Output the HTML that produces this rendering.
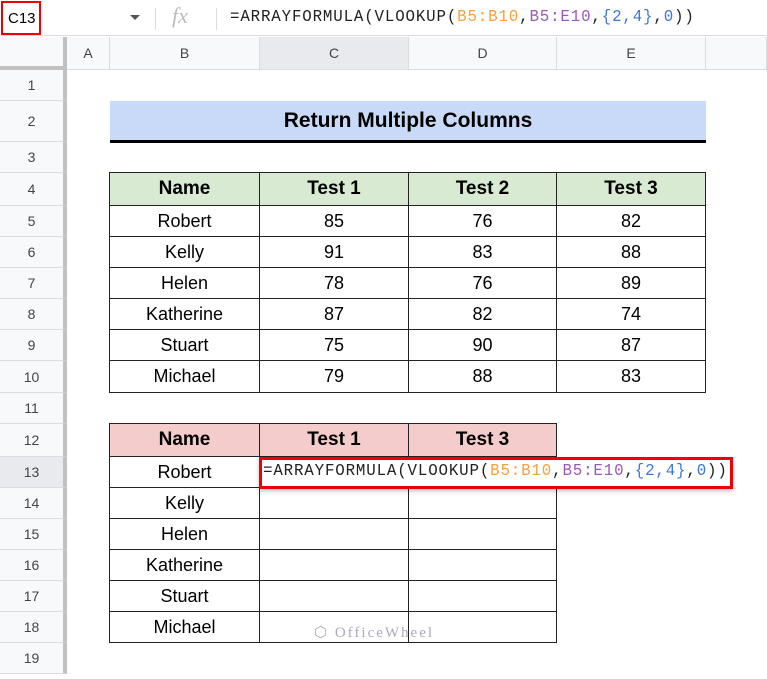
<!DOCTYPE html><html><head><style>
*{margin:0;padding:0;box-sizing:border-box}
body{width:767px;height:679px;overflow:hidden;background:#fff;font-family:"Liberation Sans",Arial,sans-serif;position:relative}
.a{position:absolute}
.hd{background:#f8f9fa;color:#444;font-size:14px;display:flex;align-items:center;justify-content:center;border-right:1px solid #dadce0;border-bottom:1px solid #dadce0}
.c{position:absolute;display:flex;align-items:center;justify-content:center;font-size:18px;color:#000;border:1px solid #222;margin:-1px 0 0 -1px}
.b{font-weight:bold;font-size:19px}
.mono{font-family:"Liberation Mono",monospace;font-size:17px;letter-spacing:0.9px;transform:scaleX(0.93);transform-origin:left center}
</style></head><body>
<div class="a" style="left:0;top:0;width:767px;height:36px;border-bottom:1px solid #dadce0"></div>
<div class="a" style="left:1px;top:1px;width:40px;height:34px;border:2px solid #e00;font-size:15px;display:flex;align-items:center;padding-left:5px">C13</div>
<div class="a" style="left:130px;top:15px;width:0;height:0;border-left:5px solid transparent;border-right:5px solid transparent;border-top:5px solid #555"></div>
<div class="a" style="left:155px;top:8px;width:1px;height:22px;background:#dadce0"></div>
<div class="a" style="left:172px;top:3px;font-family:'Liberation Serif',serif;font-style:italic;font-size:22px;color:#bbb">fx</div>
<div class="a" style="left:216px;top:8px;width:1px;height:22px;background:#dadce0"></div>
<div class="a mono" style="left:230px;top:8px;color:#222;width:520px">=ARRAYFORMULA(VLOOKUP(<span style="color:#f6a23c">B5:B10</span>,<span style="color:#9b59b6">B5:E10</span>,<span style="color:#3c78d8">{2,4}</span>,<span style="color:#3c78d8">0</span>))</div>
<div class="a hd" style="left:0;top:37px;width:67px;height:33px;border-right:4px solid #c0c0c0;border-bottom:4px solid #c0c0c0"></div>
<div class="a hd" style="left:67px;top:37px;width:43px;height:33px">A</div>
<div class="a hd" style="left:110px;top:37px;width:150px;height:33px">B</div>
<div class="a hd" style="left:260px;top:37px;width:149px;height:33px;background:#e8eaed">C</div>
<div class="a hd" style="left:409px;top:37px;width:148px;height:33px">D</div>
<div class="a hd" style="left:557px;top:37px;width:149px;height:33px">E</div>
<div class="a hd" style="left:706px;top:37px;width:61px;height:33px"></div>
<div id="rh"></div>
<div class="a" style="left:110px;top:101px;width:596px;height:39px;background:#c9daf8;display:flex;align-items:center;justify-content:center;font-weight:bold;font-size:21px">Return Multiple Columns</div>
<div class="a" style="left:110px;top:140px;width:596px;height:3px;background:#000"></div>
<div id="t"></div>
<div class="a" style="left:259px;top:457px;width:474px;height:32px;border:3px solid #e00;background:#fff;box-shadow:0 2px 4px rgba(0,0,0,.25)"></div>
<div class="a mono" style="left:263px;top:462px;color:#222;width:520px">=ARRAYFORMULA(VLOOKUP(<span style="color:#f6a23c">B5:B10</span>,<span style="color:#9b59b6">B5:E10</span>,<span style="color:#3c78d8">{2,4}</span>,<span style="color:#3c78d8">0</span>))</div>
<div class="a" style="left:314px;top:623px;font-family:'Liberation Serif',serif;font-size:15px;letter-spacing:2px;color:#aab">⬡ OfficeWheel</div>
<script>
var R=[70,101,142,173,206,237,268,299,330,361,393,424,457,488,519,550,581,612,643,674];
var h='';
for(var i=0;i<19;i++)h+='<div class="a hd" style="left:0;top:'+R[i]+'px;width:67px;height:'+(R[i+1]-R[i])+'px;border-right:4px solid #c0c0c0;'+(i==12?'background:#e8eaed;':'')+'">'+(i+1)+'</div>';
document.getElementById('rh').outerHTML=h;
var X=[110,260,409,557,706];
var t1=[['Name','Test 1','Test 2','Test 3'],['Robert',85,76,82],['Kelly',91,83,88],['Helen',78,76,89],['Katherine',87,82,74],['Stuart',75,90,87],['Michael',79,88,83]];
var s='';
for(var r=0;r<7;r++)for(var c=0;c<4;c++){s+='<div class="c'+(r==0?' b':'')+'" style="left:'+X[c]+'px;top:'+R[3+r]+'px;width:'+(X[c+1]-X[c]+1)+'px;height:'+(R[4+r]-R[3+r]+1)+'px;'+(r==0?'background:#d9ead3;':'')+'">'+t1[r][c]+'</div>';}
var t2=['Name','Robert','Kelly','Helen','Katherine','Stuart','Michael'];
for(var r=0;r<7;r++)for(var c=0;c<3;c++){var tx=c==0?t2[r]:(r==0?(c==1?'Test 1':'Test 3'):'');s+='<div class="c'+(r==0?' b':'')+'" style="left:'+X[c]+'px;top:'+R[11+r]+'px;width:'+(X[c+1]-X[c]+1)+'px;height:'+(R[12+r]-R[11+r]+1)+'px;'+(r==0?'background:#f4cccc;':'')+'">'+tx+'</div>';}
document.getElementById('t').outerHTML=s;
</script>
</body></html>
